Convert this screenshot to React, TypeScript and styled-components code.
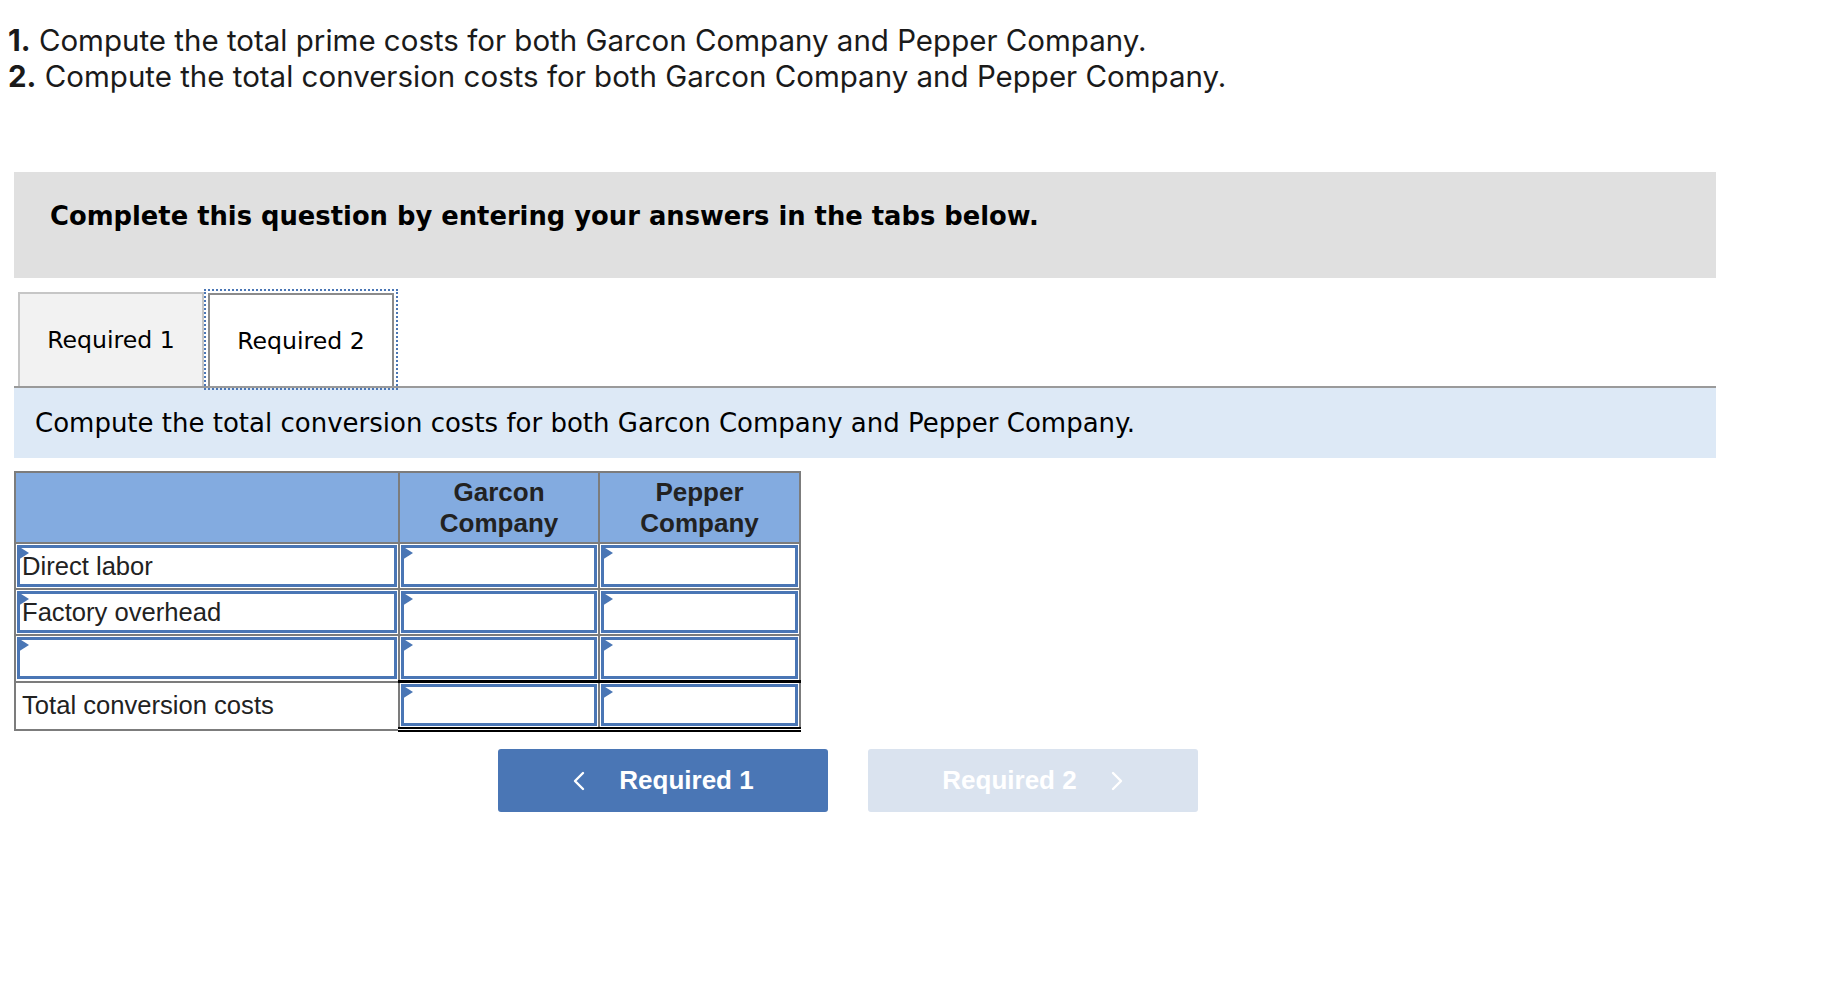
import React from 'react';
import styled, { createGlobalStyle } from 'styled-components';

const GlobalStyle = createGlobalStyle`
  body {
    margin: 8px;
    background: #ffffff;
    font-family: "Liberation Sans", Arial, sans-serif;
  }
`;

const Prompt = styled.div`
  font-family: Inter, "Open Sans", sans-serif;
  font-size: 29.5px;
  line-height: 36px;
  color: #1a1a1a;
  padding-top: 14px;

  b {
    font-weight: 700;
  }
`;

const Panel = styled.div`
  margin: 78px 0 0 6px;
  width: 1702px;
`;

const Banner = styled.div`
  box-sizing: border-box;
  height: 106px;
  background: #e0e0e0;
  padding: 29px 0 0 36px;
  font-family: "DejaVu Sans", Verdana, sans-serif;
  font-weight: 700;
  font-size: 25.8px;
  line-height: 30px;
  color: #000;
`;

const TabBar = styled.div`
  display: flex;
  align-items: flex-end;
  gap: 4px;
  padding: 14px 0 0 4px;
  border-bottom: 2px solid #9a9a9a;
`;

const Tab = styled.div<{ $active?: boolean }>`
  box-sizing: border-box;
  width: 186px;
  height: ${(p) => (p.$active ? 93 : 94)}px;
  display: flex;
  align-items: center;
  justify-content: center;
  font-family: "DejaVu Sans", Verdana, sans-serif;
  font-size: 23.6px;
  color: #000;
  background: ${(p) => (p.$active ? '#ffffff' : '#f2f2f2')};
  border: 2px solid ${(p) => (p.$active ? '#8c8c8c' : '#c6c6c6')};
  border-bottom: none;
  outline: ${(p) => (p.$active ? '2px dotted #4a76b5' : 'none')};
  outline-offset: 2px;
`;

const Band = styled.div`
  height: 70px;
  background: #dde9f6;
  display: flex;
  align-items: center;
  padding-left: 21px;
  font-family: "DejaVu Sans", Verdana, sans-serif;
  font-size: 26px;
  color: #000;
`;

const Grid = styled.table`
  margin-top: 13px;
  border-collapse: collapse;
  table-layout: fixed;
  width: 785px;
  font-family: "Liberation Sans", Arial, sans-serif;
  color: #222;
`;

const HeadCell = styled.th`
  background: #83abe0;
  border: 2px solid #7c7c7c;
  height: 69px;
  padding: 0;
  font-size: 26px;
  line-height: 31px;
  font-weight: 700;
  text-align: center;
  color: #222;
`;

const Cell = styled.td<{ $rule?: 'single' | 'double' }>`
  border: 2px solid #7c7c7c;
  padding: 1px;
  height: 42px;
  ${(p) => p.$rule === 'single' && 'border-bottom: 3px solid #000;'}
  ${(p) => p.$rule === 'double' && 'border-bottom: 5px double #000;'}
`;

const InputBox = styled.div`
  position: relative;
  box-sizing: border-box;
  height: 42px;
  border: 3px solid #4a76b5;
  background: #fff;
  display: flex;
  align-items: center;
  padding-left: 2px;
  font-size: 25.6px;
  white-space: nowrap;
`;

const Marker = styled.span`
  position: absolute;
  left: -2px;
  top: -2px;
  width: 0;
  height: 0;
  border-top: 7px solid transparent;
  border-bottom: 7px solid transparent;
  border-left: 11px solid #4a76b5;
`;

const PlainLabel = styled.div`
  height: 42px;
  display: flex;
  align-items: center;
  padding-left: 5px;
  font-size: 25.6px;
  white-space: nowrap;
`;

const NavRow = styled.div`
  display: flex;
  gap: 40px;
  margin: 17px 0 0 484px;
`;

const NavButton = styled.button<{ $muted?: boolean }>`
  width: 330px;
  height: 63px;
  border: none;
  border-radius: 3px;
  background: ${(p) => (p.$muted ? '#dae3ef' : '#4a76b5')};
  color: #fff;
  display: flex;
  align-items: center;
  justify-content: center;
  gap: 33px;
  font-family: "Liberation Sans", Arial, sans-serif;
  font-weight: 700;
  font-size: 26px;
  padding: 0;
`;

const Chevron = ({ dir }: { dir: 'left' | 'right' }) => (
  <svg width="14" height="20" viewBox="0 0 14 20" fill="none">
    <path
      d={dir === 'left' ? 'M11 2 L3 10 L11 18' : 'M3 2 L11 10 L3 18'}
      stroke="#ffffff"
      strokeWidth="2.4"
      strokeLinecap="round"
      strokeLinejoin="round"
    />
  </svg>
);

const EntryCell = ({ label, rule }: { label?: string; rule?: 'single' | 'double' }) => (
  <Cell $rule={rule}>
    <InputBox>
      <Marker />
      {label}
    </InputBox>
  </Cell>
);

const App = () => {
  return (
    <>
      <GlobalStyle />
      <Prompt>
        <div>
          <b>1.</b> Compute the total prime costs for both Garcon Company and Pepper Company.
        </div>
        <div>
          <b>2.</b> Compute the total conversion costs for both Garcon Company and Pepper Company.
        </div>
      </Prompt>
      <Panel>
        <Banner>Complete this question by entering your answers in the tabs below.</Banner>
        <TabBar>
          <Tab>Required 1</Tab>
          <Tab $active>Required 2</Tab>
        </TabBar>
        <Band>Compute the total conversion costs for both Garcon Company and Pepper Company.</Band>
        <Grid>
          <colgroup>
            <col style={{ width: 384 }} />
            <col style={{ width: 200 }} />
            <col style={{ width: 201 }} />
          </colgroup>
          <thead>
            <tr>
              <HeadCell />
              <HeadCell>
                Garcon
                <br />
                Company
              </HeadCell>
              <HeadCell>
                Pepper
                <br />
                Company
              </HeadCell>
            </tr>
          </thead>
          <tbody>
            <tr>
              <EntryCell label="Direct labor" />
              <EntryCell />
              <EntryCell />
            </tr>
            <tr>
              <EntryCell label="Factory overhead" />
              <EntryCell />
              <EntryCell />
            </tr>
            <tr>
              <EntryCell />
              <EntryCell rule="single" />
              <EntryCell rule="single" />
            </tr>
            <tr>
              <Cell>
                <PlainLabel>Total conversion costs</PlainLabel>
              </Cell>
              <EntryCell rule="double" />
              <EntryCell rule="double" />
            </tr>
          </tbody>
        </Grid>
        <NavRow>
          <NavButton>
            <Chevron dir="left" />
            Required 1
          </NavButton>
          <NavButton $muted>
            Required 2
            <Chevron dir="right" />
          </NavButton>
        </NavRow>
      </Panel>
    </>
  );
};

export default App;
